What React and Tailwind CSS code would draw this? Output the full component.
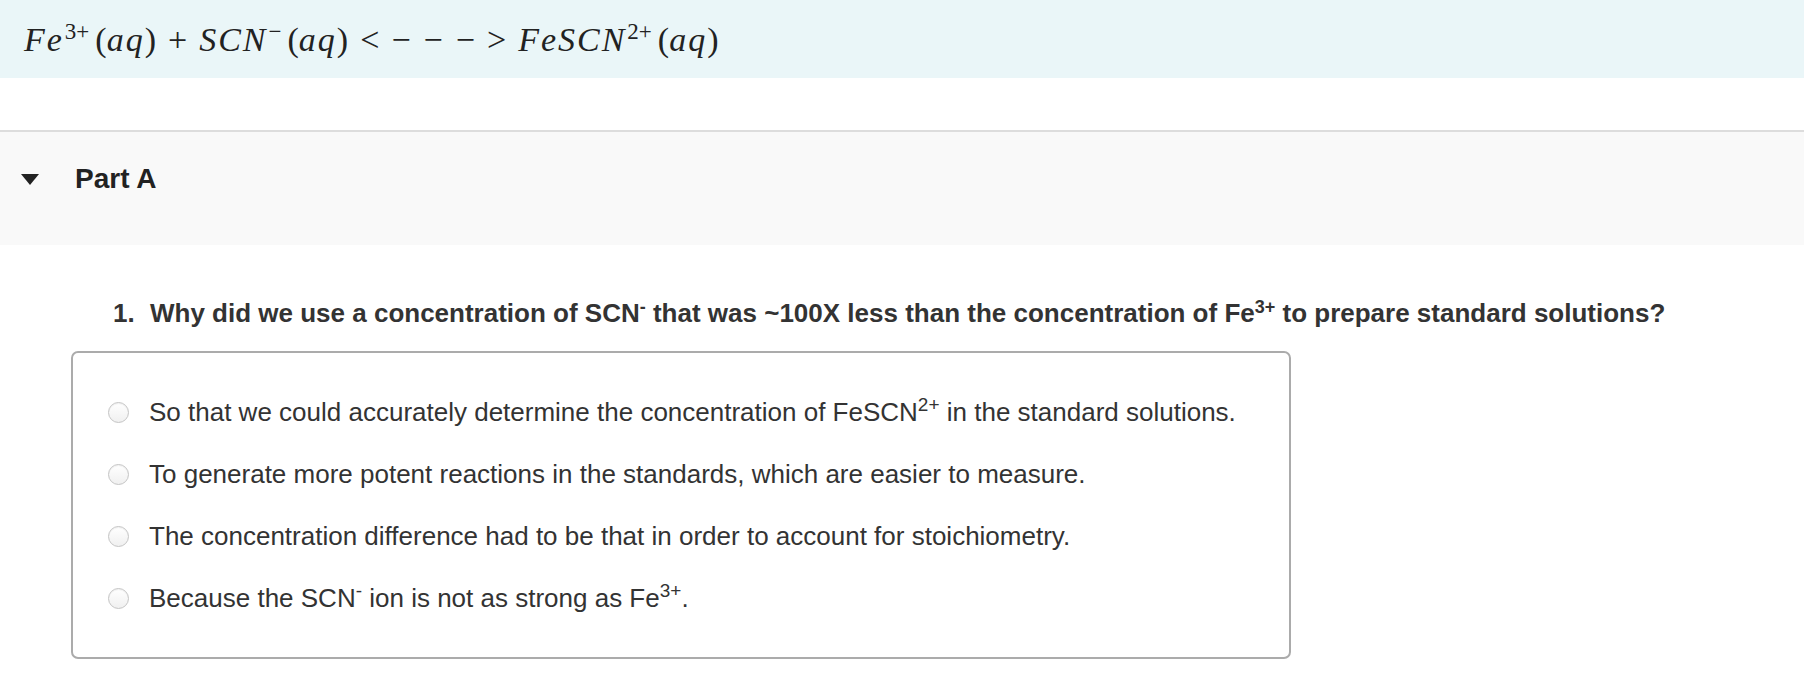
import React from 'react'

const sans = { fontFamily: '"Liberation Sans", Arial, sans-serif' }

function Sup({ children }) {
  return <sup className="not-italic text-[23px] ml-[1px] mr-[6px]">{children}</sup>
}

function V({ children }) {
  return <span className="tracking-[2px]">{children}</span>
}

function Aq() {
  return (
    <>
      <span className="not-italic">(</span><V>aq</V><span className="not-italic">)</span>
    </>
  )
}

function Eq() {
  return (
    <div className="flex items-baseline text-[34px] text-[#222] italic whitespace-pre" style={{ fontFamily: '"Liberation Serif", "Times New Roman", serif' }}>
      <V>Fe</V>
      <Sup>3+</Sup>
      <Aq />
      <span className="not-italic mx-[12px]">+</span>
      <V>SCN</V>
      <Sup>−</Sup>
      <Aq />
      <span className="not-italic mx-[12px]">&lt;</span>
      <span className="not-italic flex gap-[13px]"><span>−</span><span>−</span><span>−</span></span>
      <span className="not-italic mx-[12px]">&gt;</span>
      <V>FeSCN</V>
      <Sup>2+</Sup>
      <Aq />
    </div>
  )
}

const osup = 'text-[19px]'

const options = [
  <>So that we could accurately determine the concentration of FeSCN<sup className={osup}>2+</sup> in the standard solutions.</>,
  <>To generate more potent reactions in the standards, which are easier to measure.</>,
  <>The concentration difference had to be that in order to account for stoichiometry.</>,
  <>Because the SCN<sup className={osup}>-</sup> ion is not as strong as Fe<sup className={osup}>3+</sup>.</>,
]

export default function App() {
  return (
    <div className="w-[1804px] h-[674px] bg-white overflow-hidden" style={sans}>
      <div className="h-[78px] bg-[#eaf6f8] flex items-center pl-[24px]">
        <Eq />
      </div>
      <div className="h-[52px]" />
      <div className="border-t-2 border-[#dddddd] bg-[#f9f9f9] h-[115px] flex items-start pt-[26px]">
        <div className="h-[42px] flex items-center">
          <svg width="18" height="11" viewBox="0 0 18 11" className="ml-[21px]">
            <polygon points="0,0 18,0 9,11" fill="#222" />
          </svg>
        </div>
        <span className="ml-[36px] text-[28px] leading-[42px] font-bold text-[#222]">Part A</span>
      </div>
      <div className="pt-[50px] pl-[113px]">
        <p className="text-[26px] leading-[36px] font-bold text-[#333] flex">
          <span className="w-[37px]">1.</span>
          <span>Why did we use a concentration of SCN<sup className="text-[18px]">-</sup> that was ~100X less than the concentration of Fe<sup className="text-[18px]">3+</sup> to prepare standard solutions?</span>
        </p>
      </div>
      <div className="ml-[71px] mt-[20px] w-[1220px] h-[308px] border-2 border-[#ababab] rounded-[7px] pt-[28px]">
        {options.map((o, i) => (
          <label key={i} className="flex items-center h-[62px] pl-[35px] text-[26px] text-[#333]">
            <span className="w-[21px] h-[21px] rounded-full border border-[#c4c4c4] bg-gradient-to-b from-white to-[#f0f0f0] shadow-[inset_0_1px_1px_rgba(0,0,0,0.06)] shrink-0" />
            <span className="ml-[20px]">{o}</span>
          </label>
        ))}
      </div>
    </div>
  )
}
